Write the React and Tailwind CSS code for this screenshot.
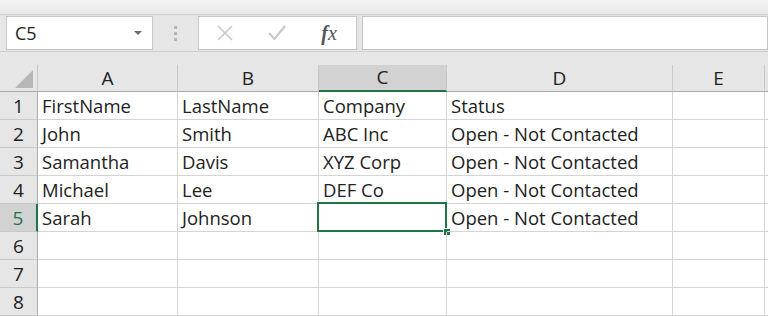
import React from "react";

const cols = ["A", "B", "C", "D", "E", ""];
const data = [
  ["FirstName", "LastName", "Company", "Status", "", ""],
  ["John", "Smith", "ABC Inc", "Open - Not Contacted", "", ""],
  ["Samantha", "Davis", "XYZ Corp", "Open - Not Contacted", "", ""],
  ["Michael", "Lee", "DEF Co", "Open - Not Contacted", "", ""],
  ["Sarah", "Johnson", "", "Open - Not Contacted", "", ""],
  ["", "", "", "", "", ""],
  ["", "", "", "", "", ""],
  ["", "", "", "", "", ""],
];

export default function App() {
  const font = { fontFamily: '"Open Sans", "Noto Sans", sans-serif' };
  return (
    <div className="w-[768px] h-[316px] overflow-hidden bg-white text-[#222]" style={font}>
      <div className="h-[15px] bg-gradient-to-b from-[#f4f4f4] to-[#e9e9e9] border-b border-[#d2d2d2]" />
      <div className="h-[37px] bg-[#e6e6e6] flex items-start pt-[1px] pl-[6px] border-b border-[#d0d0d0]">
        <div className="w-[147px] h-[34px] bg-white border border-[#c6c6c6] flex items-center justify-between pl-[8px] pr-[9px]">
          <span className="text-[18px] leading-none">C5</span>
          <svg width="10" height="6" viewBox="0 0 10 6"><path d="M1 1 L9 1 L5 5 Z" fill="#6b6b6b" /></svg>
        </div>
        <div className="w-[45px] h-[34px] flex flex-col items-center justify-center gap-[3px]">
          <div className="w-[3px] h-[3px] bg-[#b5b5b5]" />
          <div className="w-[3px] h-[3px] bg-[#b5b5b5]" />
          <div className="w-[3px] h-[3px] bg-[#b5b5b5]" />
        </div>
        <div className="w-[159px] h-[34px] bg-white border border-[#c6c6c6] flex items-center">
          <div className="w-[52px] flex justify-center">
            <svg width="18" height="18" viewBox="0 0 18 18"><path d="M2 2 L16 16 M16 2 L2 16" stroke="#c8c8c8" strokeWidth="1.6" /></svg>
          </div>
          <div className="w-[52px] flex justify-center">
            <svg width="20" height="18" viewBox="0 0 20 18"><path d="M2 9 L7.5 15 L18 2" stroke="#c8c8c8" strokeWidth="2" fill="none" /></svg>
          </div>
          <div className="w-[52px] flex justify-center">
            <span className="text-[20px] italic text-[#555] leading-none" style={{ fontFamily: '"Liberation Serif", serif' }}>
              <span className="font-bold">f</span>x
            </span>
          </div>
        </div>
        <div className="ml-[5px] flex-1 h-[34px] bg-white border border-[#c6c6c6]" />
      </div>
      <div className="h-[13px] bg-[#e6e6e6]" />
      <div className="grid grid-cols-[38px_140px_141px_128px_226px_92px_1fr]">
        <div className="h-[27px] bg-[#e6e6e6] border-r border-[#c8c8c8] border-b border-b-[#ababab] flex items-end justify-end pr-[4px] pb-[3px]">
          <svg width="18" height="18" viewBox="0 0 18 18"><path d="M18 0 L18 18 L0 18 Z" fill="#b8b8b8" /></svg>
        </div>
        {cols.map((c, i) => (
          <div
            key={c + i}
            className={
              "h-[27px] flex items-end justify-center pb-[1px] text-[19px] leading-[24px] border-r border-[#c8c8c8] " +
              (c === "C"
                ? "bg-[#d2d2d2] border-b-2 border-b-[#217346]"
                : "bg-[#e6e6e6] border-b border-b-[#ababab]")
            }
          >
            {c}
          </div>
        ))}
        {data.map((row, r) => (
          <React.Fragment key={r}>
            <div
              className={
                "h-[28px] flex items-end justify-center text-[19px] leading-[26px] border-b border-[#c8c8c8] " +
                (r === 4
                  ? "bg-[#d2d2d2] text-[#217346] border-r-2 border-r-[#217346]"
                  : "bg-[#e6e6e6] border-r border-r-[#ababab]")
              }
            >
              {r + 1}
            </div>
            {row.map((v, ci) => (
              <div
                key={ci}
                className="relative h-[28px] border-r border-b border-[#d4d4d4] flex items-end pl-[4px] text-[18.5px] leading-[26px] whitespace-nowrap"
              >
                {v}
                {r === 4 && ci === 2 && (
                  <>
                    <div className="absolute left-[-2px] top-[-2px] right-[-1px] bottom-[-1px] border-2 border-[#217346]" />
                    <div className="absolute right-[-5px] bottom-[-5px] w-[8px] h-[8px] bg-[#217346] border border-white" />
                  </>
                )}
              </div>
            ))}
          </React.Fragment>
        ))}
      </div>
    </div>
  );
}
